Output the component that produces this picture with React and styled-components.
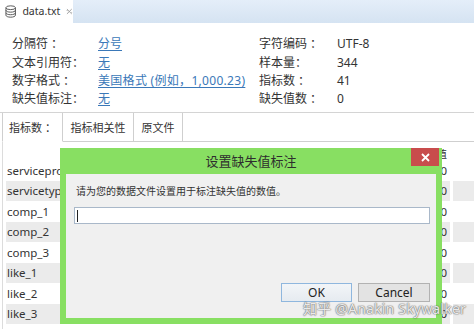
import React from "react";
import styled, { createGlobalStyle } from "styled-components";

const Global = createGlobalStyle`
  html, body { margin: 0; padding: 0; background: #fff; }
  body { font-family: "Noto Sans", "Noto Sans CJK SC", sans-serif; color: #333; }
`;

const CJK = `"Noto Sans", "Noto Sans CJK SC", sans-serif`;

const Screen = styled.div`
  position: relative;
  width: 474px;
  height: 329px;
  overflow: hidden;
  background: #fff;
  display: flex;
  flex-direction: column;
`;

const EditorBar = styled.div`
  height: 23px;
  flex: none;
  display: flex;
  background: linear-gradient(#e4eef9, #d5e3f2);
`;

const EditorTab = styled.div`
  width: 73px;
  background: #fff;
  display: flex;
  align-items: center;
  padding-left: 5px;
  box-sizing: border-box;
  gap: 6px;
`;

const TabLabel = styled.span`
  font-family: "Noto Sans", sans-serif;
  font-size: 10.5px;
  color: #333;
  line-height: 1;
`;

const InfoPanel = styled.div`
  flex: none;
  height: 90px;
  box-sizing: border-box;
  padding: 12px 0 0 12px;
  border-bottom: 1px solid #d4d4d4;
  display: grid;
  grid-template-columns: 86px 161px 78px 1fr;
  grid-auto-rows: 18.4px;
  align-items: center;
  font-family: ${CJK};
  font-size: 12px;
`;

const Label = styled.span`
  color: #333;
  white-space: pre;
  line-height: 18px;
`;

const Value = styled.span`
  color: ${(p) => (p.$link ? "#3a78b8" : "#333")};
  text-decoration: ${(p) => (p.$link ? "underline" : "none")};
  text-underline-offset: 2px;
  white-space: pre;
  line-height: 18px;
  letter-spacing: ${(p) => (p.$wide ? "0.3px" : "0")};
`;

const ViewTabs = styled.div`
  flex: none;
  height: 29px;
  display: flex;
  padding-left: 2px;
`;

const ViewTab = styled.div`
  width: ${(p) => p.$w}px;
  box-sizing: border-box;
  display: flex;
  align-items: center;
  justify-content: center;
  font-family: ${CJK};
  font-size: 11px;
  color: #333;
  border-right: 1px solid #cfcfcf;
  border-left: ${(p) => (p.$first ? "1px solid #cfcfcf" : "none")};
  border-bottom: ${(p) => (p.$active ? "1px solid transparent" : "1px solid #cfcfcf")};
  background: #fff;
`;

const TabFill = styled.div`
  flex: 1;
  border-bottom: 1px solid #cfcfcf;
`;

const TablePanel = styled.div`
  flex: 1;
  margin-left: 2px;
  border-left: 1px solid #dcdcdc;
  padding-left: 3px;
`;

const Grid = styled.div`
  display: grid;
  grid-template-columns: 107px 132px 64px 132px 1fr;
  column-gap: 3px;
  grid-template-rows: 18px;
  grid-auto-rows: 20.5px;
  font-family: "Noto Sans", sans-serif;
  font-size: 11.5px;
  color: #333;
`;

const Cell = styled.div`
  display: flex;
  align-items: ${(p) => (p.$head ? "flex-end" : "center")};
  justify-content: ${(p) => (p.$right ? "flex-end" : "flex-start")};
  padding: ${(p) => (p.$right ? "0 3px 0 0" : "0 0 0 1px")};
  background: ${(p) => (p.$shade ? "#ebebeb" : "transparent")};
  white-space: nowrap;
  overflow: hidden;
  line-height: ${(p) => (p.$head ? "11px" : "1")};
  font-family: ${(p) => (p.$head ? CJK : "inherit")};
  font-size: ${(p) => (p.$head ? "10.5px" : "inherit")};
`;

const Dialog = styled.div`
  position: absolute;
  left: 60px;
  top: 148px;
  width: 382px;
  height: 176px;
  box-sizing: border-box;
  background: #88df62;
  display: flex;
  flex-direction: column;
  padding: 0 6px 6px 6px;
`;

const TitleBar = styled.div`
  height: 26px;
  flex: none;
  display: grid;
  grid-template-columns: 1fr auto 1fr;
  align-items: center;
  margin: 0 -6px;
`;

const Title = styled.div`
  grid-column: 2;
  font-family: ${CJK};
  font-size: 13px;
  color: #2e2e2e;
  line-height: 1;
`;

const CloseButton = styled.div`
  grid-column: 3;
  justify-self: end;
  align-self: start;
  margin-right: 3px;
  width: 28px;
  height: 18px;
  background: #c84c4c;
  display: flex;
  align-items: center;
  justify-content: center;
`;

const Body = styled.div`
  flex: 1;
  background: #f0f0f0;
  display: flex;
  flex-direction: column;
  padding: 11px 6px 16px 8px;
`;

const Prompt = styled.div`
  font-family: ${CJK};
  font-size: 10px;
  line-height: 13px;
  color: #333;
  padding-left: 2px;
`;

const Field = styled.div`
  margin-top: 9px;
  height: 17px;
  box-sizing: border-box;
  background: #fff;
  border: 1px solid #a9b8c9;
  display: flex;
  align-items: center;
  padding-left: 2px;
`;

const Caret = styled.span`
  width: 1px;
  height: 12px;
  background: #222;
`;

const Buttons = styled.div`
  margin-top: auto;
  display: flex;
  justify-content: flex-end;
  gap: 6px;
`;

const Button = styled.div`
  width: ${(p) => p.$w}px;
  height: 19px;
  box-sizing: border-box;
  border: 1px solid ${(p) => (p.$primary ? "#8fb7de" : "#b2b2b2")};
  background: ${(p) => (p.$primary ? "linear-gradient(#f2f5f8, #e6ebf0)" : "#e3e3e3")};
  display: flex;
  align-items: center;
  justify-content: center;
  font-family: "Noto Sans", sans-serif;
  font-size: 12px;
  color: #222;
  line-height: 1;
`;

const Watermark = styled.div`
  position: absolute;
  left: 303px;
  top: 300px;
  font-family: ${CJK};
  font-size: 14px;
  line-height: 18px;
  color: rgba(255, 255, 255, 0.85);
  text-shadow: 0 0 1px #777, 0 0 1px #777, 0 0 2px rgba(0,0,0,0.4);
  white-space: nowrap;
  letter-spacing: 0.2px;
`;

const DbIcon = () => (
  <svg width="12" height="13" viewBox="0 0 12 13" fill="none" stroke="#555" strokeWidth="1">
    <ellipse cx="6" cy="2.5" rx="5" ry="2" />
    <path d="M1 2.5v8c0 1.1 2.2 2 5 2s5-.9 5-2v-8" />
    <path d="M1 5.2c0 1.1 2.2 2 5 2s5-.9 5-2" />
    <path d="M1 7.9c0 1.1 2.2 2 5 2s5-.9 5-2" />
  </svg>
);

const TabClose = () => (
  <svg width="7" height="7" viewBox="0 0 7 7" stroke="#9a9a9a" strokeWidth="1">
    <path d="M1 1l5 5M6 1l-5 5" />
    <path d="M0.5 2.5h2M4.5 4.5h2" stroke="#c4c4c4" />
  </svg>
);

const rows = [
  "servicepro",
  "servicetype",
  "comp_1",
  "comp_2",
  "comp_3",
  "like_1",
  "like_2",
  "like_3",
  "",
];

export default function App() {
  return (
    <>
      <Global />
      <Screen>
        <EditorBar>
          <EditorTab>
            <DbIcon />
            <TabLabel>data.txt</TabLabel>
            <TabClose />
          </EditorTab>
        </EditorBar>

        <InfoPanel>
          <Label>分隔符 ：</Label>
          <Value $link>分号</Value>
          <Label>字符编码 ：</Label>
          <Value>UTF-8</Value>

          <Label>文本引用符：</Label>
          <Value $link>无</Value>
          <Label>样本量：</Label>
          <Value>344</Value>

          <Label>数字格式 ：</Label>
          <Value $link $wide>美国格式 (例如，1,000.23)</Value>
          <Label>指标数 ：</Label>
          <Value>41</Value>

          <Label>缺失值标注：</Label>
          <Value $link>无</Value>
          <Label>缺失值数 ：</Label>
          <Value>0</Value>
        </InfoPanel>

        <ViewTabs>
          <ViewTab $w={61} $first $active>指标数 ：</ViewTab>
          <ViewTab $w={71}>指标相关性</ViewTab>
          <ViewTab $w={49}>原文件</ViewTab>
          <TabFill />
        </ViewTabs>

        <TablePanel>
          <Grid>
            <Cell $head />
            <Cell $head />
            <Cell $head />
            <Cell $head $right>缺失值</Cell>
            <Cell $head />
            {rows.map((name, i) => {
              const shade = i % 2 === 1;
              return (
                <React.Fragment key={i}>
                  <Cell $shade={shade}>{name}</Cell>
                  <Cell $shade={shade} />
                  <Cell $shade={shade} />
                  <Cell $shade={shade} $right>{name ? "0" : ""}</Cell>
                  <Cell $shade={shade} />
                </React.Fragment>
              );
            })}
          </Grid>
        </TablePanel>

        <Dialog>
          <TitleBar>
            <Title>设置缺失值标注</Title>
            <CloseButton>
              <svg width="9" height="9" viewBox="0 0 9 9" stroke="#fff" strokeWidth="1.8">
                <path d="M1 1l7 7M8 1l-7 7" />
              </svg>
            </CloseButton>
          </TitleBar>
          <Body>
            <Prompt>请为您的数据文件设置用于标注缺失值的数值。</Prompt>
            <Field>
              <Caret />
            </Field>
            <Buttons>
              <Button $w={71} $primary>OK</Button>
              <Button $w={72}>Cancel</Button>
            </Buttons>
          </Body>
        </Dialog>

        <Watermark>知乎 @Anakin Skywalker</Watermark>
      </Screen>
    </>
  );
}
